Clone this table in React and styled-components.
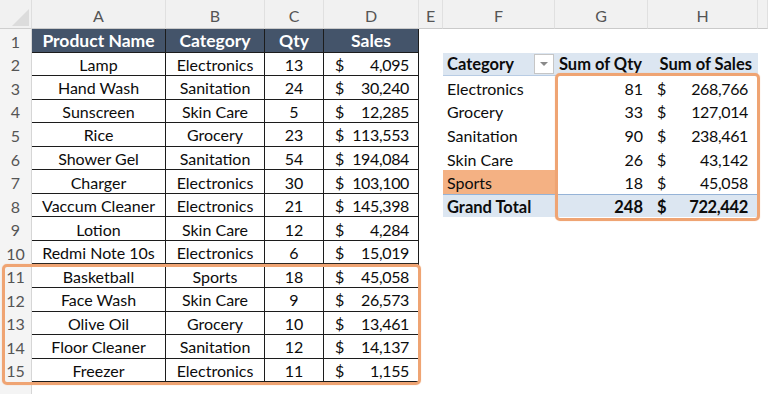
import React from "react"
import styled, { createGlobalStyle } from "styled-components"

const GlobalStyle = createGlobalStyle`
  html, body {
    margin: 0;
    padding: 0;
    background: #fff;
  }
`

const Sheet = styled.div`
  display: grid;
  grid-template-columns: 32px 134px 99px 59px 95px 24px 112px 93px 110px 1fr;
  grid-template-rows: 29px repeat(15, 23.55px) 1fr;
  width: 768px;
  height: 394px;
  overflow: hidden;
  background: #fff;
  font-family: Lato, "Open Sans", sans-serif;
  font-size: 16px;
  color: #0c0c0c;
`

const Cell = styled.div`
  grid-row: ${(p) => p.$r};
  grid-column: ${(p) => p.$c};
  box-sizing: border-box;
  display: flex;
  align-items: center;
  min-width: 0;
  white-space: nowrap;
  overflow: hidden;
`

const Corner = styled(Cell)`
  background: #f1f1f1;
  border-bottom: 1px solid #cfcfcf;
  border-right: 1px solid #dedede;
  justify-content: flex-end;
  align-items: flex-end;
  padding: 0 2px 2px 0;
`

const CornerMark = styled.div`
  width: 0;
  height: 0;
  border-left: 17px solid transparent;
  border-bottom: 17px solid #dcdcdc;
`

const ColHead = styled(Cell)`
  background: #f1f1f1;
  border-bottom: 1px solid #cacaca;
  border-right: 1px solid #e0e0e0;
  justify-content: center;
  color: #555;
  font-size: 16px;
  padding-top: 2px;
`

const RowHead = styled(Cell)`
  background: #f4f4f4;
  border-right: 1px solid #d6d6d6;
  justify-content: center;
  color: #555;
  font-size: 16px;
  padding-top: 1px;
`

const TableHead = styled(Cell)`
  background: #44546a;
  color: #fff;
  font-weight: 700;
  justify-content: center;
  border-right: 1px solid #1c1c1c;
  border-bottom: 1px solid #1c1c1c;
  font-size: 17.5px;
`

const TableCell = styled(Cell)`
  justify-content: ${(p) => (p.$money ? "space-between" : "center")};
  padding: ${(p) => (p.$money ? "1px 9px 0 11px" : "1px 0 0 0")};
  border-right: 1px solid #1c1c1c;
  border-bottom: 1px solid #1c1c1c;
`

const Num = styled.span`
  letter-spacing: -0.35px;
`

const PivotHead = styled(Cell)`
  background: #dce6f1;
  border-bottom: 1px solid #b8cce4;
  font-weight: 700;
  font-size: 16.5px;
  justify-content: ${(p) => (p.$left ? "space-between" : "flex-end")};
  padding: ${(p) => (p.$left ? "1px 1px 0 4px" : "1px 6px 0 0")};
`

const FilterButton = styled.div`
  width: 20px;
  height: 20px;
  box-sizing: border-box;
  background: #fff;
  border: 1px solid #c6c6c6;
  display: flex;
  align-items: center;
  justify-content: center;

  &::after {
    content: "";
    border-left: 4px solid transparent;
    border-right: 4px solid transparent;
    border-top: 4px solid #8a8a8a;
  }
`

const PivotCell = styled(Cell)`
  justify-content: ${(p) => (p.$left ? "flex-start" : p.$money ? "space-between" : "flex-end")};
  padding: ${(p) => (p.$left ? "1px 0 0 4px" : p.$money ? "1px 10px 0 9px" : "1px 5px 0 0")};
  background: ${(p) => (p.$mark ? "#f4b183" : "transparent")};
`

const TotalCell = styled(PivotCell)`
  background: #dce6f1;
  border-top: 1px solid #95b3d7;
  font-weight: 700;
  font-size: 16.5px;
`

const Filler = styled(Cell)`
  background: ${(p) => (p.$gray ? "#f4f4f4" : "transparent")};
  border-right: ${(p) => (p.$gray ? "1px solid #d6d6d6" : "none")};
`

const Highlight = styled.div`
  grid-row: ${(p) => p.$r};
  grid-column: ${(p) => p.$c};
  margin: ${(p) => p.$m};
  border: 3px solid #efa473;
  border-radius: 5px;
  box-shadow: 0 0 1px rgba(239, 164, 115, 0.8);
  pointer-events: none;
  z-index: 2;
`

const letters = ["A", "B", "C", "D", "E", "F", "G", "H", ""]

const products = [
  ["Lamp", "Electronics", "13", "4,095"],
  ["Hand Wash", "Sanitation", "24", "30,240"],
  ["Sunscreen", "Skin Care", "5", "12,285"],
  ["Rice", "Grocery", "23", "113,553"],
  ["Shower Gel", "Sanitation", "54", "194,084"],
  ["Charger", "Electronics", "30", "103,100"],
  ["Vaccum Cleaner", "Electronics", "21", "145,398"],
  ["Lotion", "Skin Care", "12", "4,284"],
  ["Redmi Note 10s", "Electronics", "6", "15,019"],
  ["Basketball", "Sports", "18", "45,058"],
  ["Face Wash", "Skin Care", "9", "26,573"],
  ["Olive Oil", "Grocery", "10", "13,461"],
  ["Floor Cleaner", "Sanitation", "12", "14,137"],
  ["Freezer", "Electronics", "11", "1,155"],
]

const summary = [
  ["Electronics", "81", "268,766"],
  ["Grocery", "33", "127,014"],
  ["Sanitation", "90", "238,461"],
  ["Skin Care", "26", "43,142"],
  ["Sports", "18", "45,058"],
]

const App = () => {
  return (
    <>
      <GlobalStyle />
      <Sheet>
        <Corner $r={1} $c={1}>
          <CornerMark />
        </Corner>
        {letters.map((l, i) => (
          <ColHead key={"c" + i} $r={1} $c={i + 2}>
            {l}
          </ColHead>
        ))}
        {Array.from({ length: 15 }, (_, i) => (
          <RowHead key={"r" + i} $r={i + 2} $c={1}>
            {i + 1}
          </RowHead>
        ))}
        <Filler $r={17} $c={1} $gray />

        {["Product Name", "Category", "Qty", "Sales"].map((h, i) => (
          <TableHead key={"h" + i} $r={2} $c={i + 2}>
            {h}
          </TableHead>
        ))}
        {products.map((row, i) => (
          <React.Fragment key={"p" + i}>
            <TableCell $r={i + 3} $c={2}>{row[0]}</TableCell>
            <TableCell $r={i + 3} $c={3}>{row[1]}</TableCell>
            <TableCell $r={i + 3} $c={4}>{row[2]}</TableCell>
            <TableCell $r={i + 3} $c={5} $money>
              <span>$</span>
              <Num>{row[3]}</Num>
            </TableCell>
          </React.Fragment>
        ))}

        <PivotHead $r={3} $c={7} $left>
          Category
          <FilterButton />
        </PivotHead>
        <PivotHead $r={3} $c={8}>Sum of Qty</PivotHead>
        <PivotHead $r={3} $c={9}>Sum of Sales</PivotHead>
        {summary.map((row, i) => (
          <React.Fragment key={"s" + i}>
            <PivotCell $r={i + 4} $c={7} $left $mark={row[0] === "Sports"}>
              {row[0]}
            </PivotCell>
            <PivotCell $r={i + 4} $c={8}>{row[1]}</PivotCell>
            <PivotCell $r={i + 4} $c={9} $money>
              <span>$</span>
              <Num>{row[2]}</Num>
            </PivotCell>
          </React.Fragment>
        ))}
        <TotalCell $r={9} $c={7} $left>Grand Total</TotalCell>
        <TotalCell $r={9} $c={8}>248</TotalCell>
        <TotalCell $r={9} $c={9} $money>
          <span>$</span>
          <Num>722,442</Num>
        </TotalCell>

        <Highlight $r="12 / 17" $c="1 / 6" $m="0 -2px -3px 2px" />
        <Highlight $r="4 / 10" $c="8 / 10" $m="-3px -2px -4px 0" />
      </Sheet>
    </>
  )
}

export default App
